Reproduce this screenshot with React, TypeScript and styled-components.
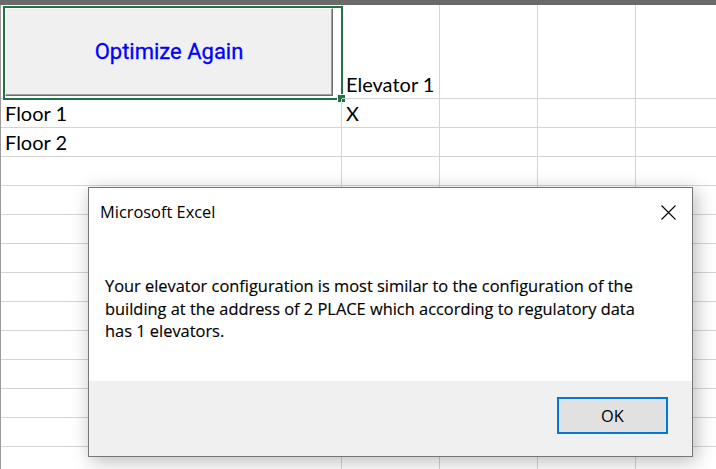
import React from 'react'
import styled, { createGlobalStyle } from 'styled-components'

const GlobalStyle = createGlobalStyle`
  html, body {
    margin: 0;
    padding: 0;
    background: #ffffff;
    overflow: hidden;
  }
`

const cellFont = `'Lato', 'Open Sans', sans-serif`
const uiFont = `'Open Sans', 'Noto Sans', 'DejaVu Sans', sans-serif`

const Sheet = styled.div`
  position: relative;
  width: 716px;
  height: 469px;
  overflow: hidden;
  background: #ffffff;
`

const TopBar = styled.div`
  height: 5px;
  background: #6a6a6a;
`

const Grid = styled.div`
  display: grid;
  grid-template-columns: 341px 98px 98px 98px 98px;
  grid-template-rows: 94px;
  grid-auto-rows: 29px;
  border-left: 1px solid #9a9a9a;
`

const Cell = styled.div`
  position: relative;
  box-sizing: border-box;
  display: flex;
  align-items: flex-end;
  padding: 0 4px 3px;
  border-right: 1px solid #d4d4d4;
  border-bottom: 1px solid #d4d4d4;
  font-family: ${cellFont};
  font-size: 20px;
  line-height: 21px;
  color: #000000;
  white-space: nowrap;
  overflow: visible;
`

const ButtonCell = styled(Cell)`
  align-items: stretch;
  padding: 3px 8px 2px 4px;
`

const ShapeButton = styled.div`
  flex: 1;
  display: flex;
  align-items: center;
  justify-content: center;
  background: #f0f0f0;
  border-top: 1px solid #ffffff;
  border-left: 1px solid #ffffff;
  border-right: 1px solid #6d6d6d;
  border-bottom: 1px solid #6d6d6d;
  box-shadow: inset -1px -1px 0 #a0a0a0;
  font-family: 'Roboto', 'Liberation Sans', Arial, sans-serif;
  font-weight: 400;
  font-size: 22px;
  color: #0000ff;
  -webkit-text-stroke: 0.3px #0000ff;
  padding-bottom: 2px;
`

const Selection = styled.div`
  position: absolute;
  left: 2px;
  top: 1px;
  right: -2px;
  bottom: -2px;
  border: 2px solid #217346;
  pointer-events: none;
`

const Handle = styled.div`
  position: absolute;
  right: -5px;
  bottom: -5px;
  width: 7px;
  height: 7px;
  background: #217346;
  border: 1px solid #ffffff;
`

const Dialog = styled.div`
  position: absolute;
  left: 88px;
  top: 187px;
  width: 605px;
  height: 270px;
  box-sizing: border-box;
  display: flex;
  flex-direction: column;
  background: #ffffff;
  border: 1px solid #777777;
  box-shadow: 3px 4px 18px rgba(0, 0, 0, 0.28);
  font-family: ${uiFont};
  color: #000000;
`

const TitleBar = styled.div`
  display: flex;
  align-items: center;
  justify-content: space-between;
  height: 46px;
  padding: 0 16px 0 11px;
`

const Title = styled.div`
  font-size: 16.4px;
  line-height: 20px;
  margin-top: 1px;
`

const CloseIcon = styled.svg`
  width: 15px;
  height: 15px;
  margin-top: 2px;
`

const Message = styled.div`
  flex: 1;
  padding: 41px 16px 0 16px;
  font-size: 16.4px;
  line-height: 22.5px;
  white-space: nowrap;
  -webkit-text-stroke: 0.15px #000;
`

const Footer = styled.div`
  height: 75px;
  display: flex;
  justify-content: flex-end;
  align-items: flex-start;
  padding: 16px 24px 0 0;
  box-sizing: border-box;
  background: #f0f0f0;
`

const OkButton = styled.div`
  width: 111px;
  height: 37px;
  box-sizing: border-box;
  display: flex;
  align-items: center;
  justify-content: center;
  background: #e1e1e1;
  border: 2px solid #0078d7;
  font-size: 16.4px;
`

const rows = [
  ['Floor 1', 'X'],
  ['Floor 2', ''],
]

const extraRows = 12

export default function App() {
  return (
    <Sheet>
      <GlobalStyle />
      <TopBar />
      <Grid>
        <ButtonCell>
          <ShapeButton>Optimize Again</ShapeButton>
          <Selection>
            <Handle />
          </Selection>
        </ButtonCell>
        <Cell>Elevator 1</Cell>
        <Cell />
        <Cell />
        <Cell />
        {rows.map((r, i) => (
          <React.Fragment key={i}>
            <Cell>{r[0]}</Cell>
            <Cell>{r[1]}</Cell>
            <Cell />
            <Cell />
            <Cell />
          </React.Fragment>
        ))}
        {Array.from({ length: extraRows * 5 }).map((_, i) => (
          <Cell key={`e${i}`} />
        ))}
      </Grid>

      <Dialog>
        <TitleBar>
          <Title>Microsoft Excel</Title>
          <CloseIcon viewBox="0 0 15 15">
            <path d="M0.5 0.5 L14.5 14.5 M14.5 0.5 L0.5 14.5" stroke="#000" strokeWidth="1.1" fill="none" />
          </CloseIcon>
        </TitleBar>
        <Message>
          Your elevator configuration is most similar to the configuration of the
          <br />
          building at the address of 2 PLACE which according to regulatory data
          <br />
          has 1 elevators.
        </Message>
        <Footer>
          <OkButton>OK</OkButton>
        </Footer>
      </Dialog>
    </Sheet>
  )
}
